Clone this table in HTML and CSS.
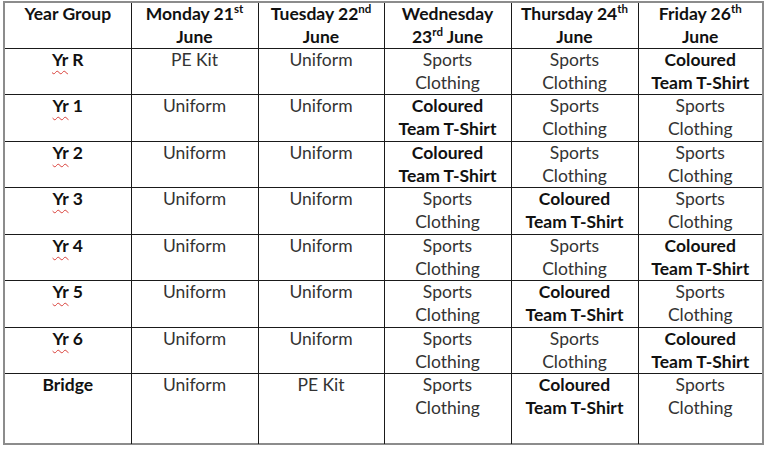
FILE: index.html
```html
<!DOCTYPE html>
<html>
<head>
<meta charset="utf-8">
<link rel="stylesheet" href="styles.css">
</head>
<body>
<div class="frame">
<table class="tt">
<colgroup>
<col class="c1"><col class="c2"><col class="c3"><col class="c4"><col class="c5"><col class="c6">
</colgroup>
<tr class="head">
<td class="b">Year Group</td>
<td class="b">Monday 21<sup>st</sup><br>June</td>
<td class="b">Tuesday 22<sup>nd</sup><br>June</td>
<td class="b">Wednesday<br>23<sup>rd</sup> June</td>
<td class="b">Thursday 24<sup>th</sup><br>June</td>
<td class="b">Friday 26<sup>th</sup><br>June</td>
</tr>
<tr class="r46">
<td class="b"><span class="sp">Yr</span> R</td>
<td>PE Kit</td>
<td>Uniform</td>
<td>Sports<br>Clothing</td>
<td>Sports<br>Clothing</td>
<td class="b">Coloured<br>Team T-Shirt</td>
</tr>
<tr class="r47">
<td class="b"><span class="sp">Yr</span> 1</td>
<td>Uniform</td>
<td>Uniform</td>
<td class="b">Coloured<br>Team T-Shirt</td>
<td>Sports<br>Clothing</td>
<td>Sports<br>Clothing</td>
</tr>
<tr class="r46">
<td class="b"><span class="sp">Yr</span> 2</td>
<td>Uniform</td>
<td>Uniform</td>
<td class="b">Coloured<br>Team T-Shirt</td>
<td>Sports<br>Clothing</td>
<td>Sports<br>Clothing</td>
</tr>
<tr class="r47">
<td class="b"><span class="sp">Yr</span> 3</td>
<td>Uniform</td>
<td>Uniform</td>
<td>Sports<br>Clothing</td>
<td class="b">Coloured<br>Team T-Shirt</td>
<td>Sports<br>Clothing</td>
</tr>
<tr class="r46">
<td class="b"><span class="sp">Yr</span> 4</td>
<td>Uniform</td>
<td>Uniform</td>
<td>Sports<br>Clothing</td>
<td>Sports<br>Clothing</td>
<td class="b">Coloured<br>Team T-Shirt</td>
</tr>
<tr class="r47">
<td class="b"><span class="sp">Yr</span> 5</td>
<td>Uniform</td>
<td>Uniform</td>
<td>Sports<br>Clothing</td>
<td class="b">Coloured<br>Team T-Shirt</td>
<td>Sports<br>Clothing</td>
</tr>
<tr class="r46">
<td class="b"><span class="sp">Yr</span> 6</td>
<td>Uniform</td>
<td>Uniform</td>
<td>Sports<br>Clothing</td>
<td>Sports<br>Clothing</td>
<td class="b">Coloured<br>Team T-Shirt</td>
</tr>
<tr class="last">
<td class="b">Bridge</td>
<td>Uniform</td>
<td>PE Kit</td>
<td>Sports<br>Clothing</td>
<td class="b">Coloured<br>Team T-Shirt</td>
<td>Sports<br>Clothing</td>
</tr>
</table>
</div>
</body>
</html>
```
FILE: styles.css
```css
html, body {
  margin: 0;
  padding: 0;
  background: #ffffff;
}
body {
  padding: 1px 4px 0 3px;
  font-family: Lato, "Open Sans", sans-serif;
  font-size: 17.5px;
  color: #333333;
}
.frame {
  width: 757px;
  height: 440px;
  border: 2px solid #8c8c8c;
  background: #fff;
}
.tt {
  width: 757px;
  border-collapse: collapse;
  border-style: hidden;
  table-layout: fixed;
}
.c1 { width: 126px; }
.c2 { width: 127px; }
.c3 { width: 126px; }
.c4 { width: 127px; }
.c5 { width: 127px; }
.c6 { width: 124px; }
.tt td {
  border: 1px solid #1a1a1a;
  vertical-align: top;
  text-align: center;
  padding: 0 2px;
  line-height: 22.5px;
  white-space: nowrap;
}
.head { height: 45px; }
.r46 { height: 46px; }
.r47 { height: 47px; }
.last { height: 70px; }
.b {
  font-weight: 700;
  color: #111;
}
sup {
  font-size: 11.5px;
  line-height: 0;
  vertical-align: 7px;
}
.sp {
  text-decoration: underline wavy #d9403a;
  text-decoration-thickness: 1px;
  text-underline-offset: 4px;
}
```
